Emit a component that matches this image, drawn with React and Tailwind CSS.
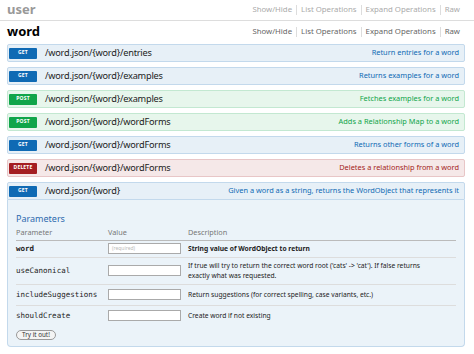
import React from "react";

const ops = [
  { m: "GET", path: "/word.json/{word}/entries", sum: "Return entries for a word" },
  { m: "GET", path: "/word.json/{word}/examples", sum: "Returns examples for a word" },
  { m: "POST", path: "/word.json/{word}/examples", sum: "Fetches examples for a word" },
  { m: "POST", path: "/word.json/{word}/wordForms", sum: "Adds a Relationship Map to a word" },
  { m: "GET", path: "/word.json/{word}/wordForms", sum: "Returns other forms of a word" },
  { m: "DELETE", path: "/word.json/{word}/wordForms", sum: "Deletes a relationship from a word" },
];

const styles = {
  GET: { row: "bg-[#e7f0f7] border-[#c3d9ec]", badge: "bg-[#0f6ab4]", sum: "text-[#0f6ab4]" },
  POST: { row: "bg-[#e7f6ec] border-[#c3e8d1]", badge: "bg-[#10a54a]", sum: "text-[#10a54a]" },
  DELETE: { row: "bg-[#f5e8e8] border-[#e8c6c7]", badge: "bg-[#a41e22]", sum: "text-[#a41e22]" },
};

function Links({ dark }) {
  const c = dark ? "text-[#666]" : "text-[#aaa]";
  const items = ["Show/Hide", "List Operations", "Expand Operations", "Raw"];
  return (
    <div className={`flex items-center text-[7.8px] ${c}`}>
      {items.map((t, i) => (
        <React.Fragment key={t}>
          {i > 0 && <span className="mx-[4px] h-[10px] w-px bg-[#ddd]" />}
          <span>{t}</span>
        </React.Fragment>
      ))}
    </div>
  );
}

function Row({ m, path, sum, last }) {
  const s = styles[m];
  return (
    <div
      className={`flex h-[18px] items-center border ${s.row} ${last ? "rounded-t-[2px]" : "mb-[5px] rounded-[2px]"}`}
    >
      <span
        className={`ml-[1px] flex h-[11px] w-[28px] items-center justify-center rounded-[1px] text-[5px] font-bold uppercase tracking-[0.2px] text-white ${s.badge}`}
      >
        {m}
      </span>
      <span className="ml-[8px] text-[9.2px] text-[#222] tracking-[-0.2px]">{path}</span>
      <span className={`ml-auto mr-[5px] text-[7.4px] ${s.sum}`}>{sum}</span>
    </div>
  );
}

const mono = "font-['DejaVu_Sans_Mono',monospace]";

function Input({ placeholder }) {
  return (
    <div className="flex h-[11px] w-[73px] items-center border border-[#aaa] bg-white pl-[3px] text-[5px] text-[#bbb]">
      {placeholder}
    </div>
  );
}

export default function App() {
  return (
    <div className="h-[354px] w-[474px] overflow-hidden bg-white font-['Noto_Sans',sans-serif]">
      <div className="flex h-[21px] items-center justify-between border-b border-[#ddd] pl-[7px] pr-[14px]">
        <span className="text-[13px] font-bold text-[#999]">user</span>
        <Links />
      </div>
      <div className="flex h-[22px] items-center justify-between pl-[7px] pr-[14px]">
        <span className="text-[13px] font-bold text-[#000]">word</span>
        <Links dark />
      </div>
      <div className="ml-[7px] mr-[9px] mt-[1px]">
        {ops.map((o) => (
          <Row key={o.m + o.path} {...o} />
        ))}
        <Row m="GET" path="/word.json/{word}" sum="Given a word as a string, returns the WordObject that represents it" last />
        <div className="rounded-b-[4px] border border-t-0 border-[#c3d9ec] bg-[#ebf3f9] px-[8px] pb-[6px] pt-[12px]">
          <div className="text-[9px] leading-[14px] text-[#2d6aae]">Parameters</div>
          <div className="grid grid-cols-[92px_80px_1fr] border-b border-[#bbb] pb-[2px] pt-[1px] text-[7.3px] text-[#777]">
            <span>Parameter</span>
            <span>Value</span>
            <span>Description</span>
          </div>
          <div className="grid h-[17px] grid-cols-[92px_80px_1fr] items-center border-b border-[#ddd] text-[6.7px] text-[#222]">
            <span className={`${mono} text-[7.5px] font-bold`}>word</span>
            <Input placeholder="(required)" />
            <span className="font-bold">String value of WordObject to return</span>
          </div>
          <div className="grid h-[27px] grid-cols-[92px_80px_1fr] items-center border-b border-[#ddd] text-[6.7px] text-[#222]">
            <span className={`${mono} text-[7.5px]`}>useCanonical</span>
            <Input />
            <span className="leading-[10px]">
              If true will try to return the correct word root ('cats' -&gt; 'cat'). If false returns<br />exactly what was requested.
            </span>
          </div>
          <div className="grid h-[21px] grid-cols-[92px_80px_1fr] items-center border-b border-[#ddd] text-[6.7px] text-[#222]">
            <span className={`${mono} text-[7.5px]`}>includeSuggestions</span>
            <Input />
            <span>Return suggestions (for correct spelling, case variants, etc.)</span>
          </div>
          <div className="grid h-[20px] grid-cols-[92px_80px_1fr] items-center text-[6.7px] text-[#222]">
            <span className={`${mono} text-[7.5px]`}>shouldCreate</span>
            <Input />
            <span>Create word if not existing</span>
          </div>
          <div className="mt-[4px] flex">
            <span className="flex h-[10px] items-center rounded-full border border-[#999] bg-[#f4f4f4] px-[5px] text-[6.3px] text-[#333]">
              Try it out!
            </span>
          </div>
        </div>
      </div>
    </div>
  );
}
